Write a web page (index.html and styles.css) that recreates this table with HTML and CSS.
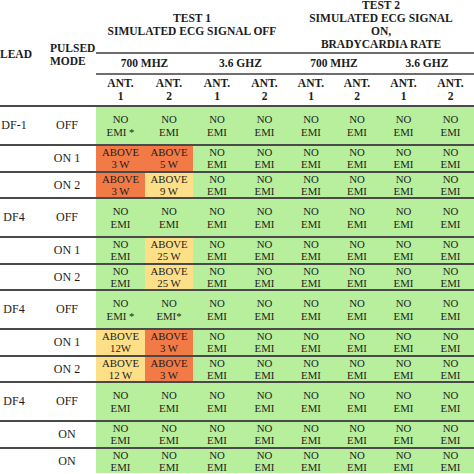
FILE: index.html
```html
<!DOCTYPE html>
<html>
<head>
<meta charset="utf-8">
<link rel="stylesheet" href="styles.css">
</head>
<body>
<table class="emi">
  <colgroup>
    <col class="c-lead"><col class="c-mode">
    <col class="c49"><col class="c48"><col class="c48"><col class="c47">
    <col class="c46"><col class="c46"><col class="c47"><col class="c47">
  </colgroup>
  <thead>
    <tr class="h-test">
      <th rowspan="3" class="h-lead">LEAD</th>
      <th rowspan="3" class="h-mode">PULSED<br>MODE</th>
      <th colspan="4">TEST 1<br>SIMULATED ECG SIGNAL OFF</th>
      <th colspan="4">TEST 2<br>SIMULATED ECG SIGNAL<br>ON,<br>BRADYCARDIA RATE</th>
    </tr>
    <tr class="h-freq">
      <th colspan="2" class="line">700 MHZ</th>
      <th colspan="2" class="line">3.6 GHZ</th>
      <th colspan="2" class="line">700 MHZ</th>
      <th colspan="2" class="line">3.6 GHZ</th>
    </tr>
    <tr class="h-ant">
      <th class="line">ANT.<br>1</th><th class="line">ANT.<br>2</th>
      <th class="line">ANT.<br>1</th><th class="line">ANT.<br>2</th>
      <th class="line">ANT.<br>1</th><th class="line">ANT.<br>2</th>
      <th class="line">ANT.<br>1</th><th class="line">ANT.<br>2</th>
    </tr>
  </thead>
  <tbody>
    <tr class="tall">
      <td class="lead">DF-1</td><td class="mode">OFF</td>
      <td class="g">NO<br>EMI *</td><td class="g">NO<br>EMI</td><td class="g">NO<br>EMI</td><td class="g">NO<br>EMI</td>
      <td class="g">NO<br>EMI</td><td class="g">NO<br>EMI</td><td class="g">NO<br>EMI</td><td class="g">NO<br>EMI</td>
    </tr>
    <tr class="short">
      <td class="lead"></td><td class="mode">ON 1</td>
      <td class="o">ABOVE<br>3 W</td><td class="o">ABOVE<br>5 W</td><td class="g">NO<br>EMI</td><td class="g">NO<br>EMI</td>
      <td class="g">NO<br>EMI</td><td class="g">NO<br>EMI</td><td class="g">NO<br>EMI</td><td class="g">NO<br>EMI</td>
    </tr>
    <tr class="short">
      <td class="lead"></td><td class="mode">ON 2</td>
      <td class="o">ABOVE<br>3 W</td><td class="y">ABOVE<br>9 W</td><td class="g">NO<br>EMI</td><td class="g">NO<br>EMI</td>
      <td class="g">NO<br>EMI</td><td class="g">NO<br>EMI</td><td class="g">NO<br>EMI</td><td class="g">NO<br>EMI</td>
    </tr>
    <tr class="tall">
      <td class="lead">DF4</td><td class="mode">OFF</td>
      <td class="g">NO<br>EMI</td><td class="g">NO<br>EMI</td><td class="g">NO<br>EMI</td><td class="g">NO<br>EMI</td>
      <td class="g">NO<br>EMI</td><td class="g">NO<br>EMI</td><td class="g">NO<br>EMI</td><td class="g">NO<br>EMI</td>
    </tr>
    <tr class="short">
      <td class="lead"></td><td class="mode">ON 1</td>
      <td class="g">NO<br>EMI</td><td class="y">ABOVE<br>25 W</td><td class="g">NO<br>EMI</td><td class="g">NO<br>EMI</td>
      <td class="g">NO<br>EMI</td><td class="g">NO<br>EMI</td><td class="g">NO<br>EMI</td><td class="g">NO<br>EMI</td>
    </tr>
    <tr class="short">
      <td class="lead"></td><td class="mode">ON 2</td>
      <td class="g">NO<br>EMI</td><td class="y">ABOVE<br>25 W</td><td class="g">NO<br>EMI</td><td class="g">NO<br>EMI</td>
      <td class="g">NO<br>EMI</td><td class="g">NO<br>EMI</td><td class="g">NO<br>EMI</td><td class="g">NO<br>EMI</td>
    </tr>
    <tr class="tall">
      <td class="lead">DF4</td><td class="mode">OFF</td>
      <td class="g">NO<br>EMI *</td><td class="g">NO<br>EMI*</td><td class="g">NO<br>EMI</td><td class="g">NO<br>EMI</td>
      <td class="g">NO<br>EMI</td><td class="g">NO<br>EMI</td><td class="g">NO<br>EMI</td><td class="g">NO<br>EMI</td>
    </tr>
    <tr class="short">
      <td class="lead"></td><td class="mode">ON 1</td>
      <td class="y">ABOVE<br>12W</td><td class="o">ABOVE<br>3 W</td><td class="g">NO<br>EMI</td><td class="g">NO<br>EMI</td>
      <td class="g">NO<br>EMI</td><td class="g">NO<br>EMI</td><td class="g">NO<br>EMI</td><td class="g">NO<br>EMI</td>
    </tr>
    <tr class="short">
      <td class="lead"></td><td class="mode">ON 2</td>
      <td class="y">ABOVE<br>12 W</td><td class="o">ABOVE<br>3 W</td><td class="g">NO<br>EMI</td><td class="g">NO<br>EMI</td>
      <td class="g">NO<br>EMI</td><td class="g">NO<br>EMI</td><td class="g">NO<br>EMI</td><td class="g">NO<br>EMI</td>
    </tr>
    <tr class="tall">
      <td class="lead">DF4</td><td class="mode">OFF</td>
      <td class="g">NO<br>EMI</td><td class="g">NO<br>EMI</td><td class="g">NO<br>EMI</td><td class="g">NO<br>EMI</td>
      <td class="g">NO<br>EMI</td><td class="g">NO<br>EMI</td><td class="g">NO<br>EMI</td><td class="g">NO<br>EMI</td>
    </tr>
    <tr class="short">
      <td class="lead"></td><td class="mode">ON</td>
      <td class="g">NO<br>EMI</td><td class="g">NO<br>EMI</td><td class="g">NO<br>EMI</td><td class="g">NO<br>EMI</td>
      <td class="g">NO<br>EMI</td><td class="g">NO<br>EMI</td><td class="g">NO<br>EMI</td><td class="g">NO<br>EMI</td>
    </tr>
    <tr class="short">
      <td class="lead"></td><td class="mode">ON</td>
      <td class="g">NO<br>EMI</td><td class="g">NO<br>EMI</td><td class="g">NO<br>EMI</td><td class="g">NO<br>EMI</td>
      <td class="g">NO<br>EMI</td><td class="g">NO<br>EMI</td><td class="g">NO<br>EMI</td><td class="g">NO<br>EMI</td>
    </tr>
  </tbody>
</table>
</body>
</html>
```

FILE: styles.css
```css
html, body {
  margin: 0;
  padding: 0;
  background: #ffffff;
  overflow: hidden;
}

.emi {
  margin-top: -3px;
  width: 474px;
  table-layout: fixed;
  border-collapse: separate;
  border-spacing: 0;
  font-family: "Liberation Serif", "Times New Roman", serif;
  color: #1c1c1c;
}

.c-lead { width: 28px; }
.c-mode { width: 68px; }
.c49 { width: 49px; }
.c48 { width: 48px; }
.c47 { width: 47px; }
.c46 { width: 46px; }

.emi th {
  font-size: 11.5px;
  font-weight: bold;
  line-height: 13px;
  padding: 0;
  text-align: center;
  vertical-align: middle;
  white-space: nowrap;
}

.h-test { height: 55px; }
.h-freq { height: 21px; }
.h-ant { height: 32px; }

.emi th.line { border-top: 2px solid #6e6e6e; }

.emi th.h-lead {
  padding-top: 7px;
  text-align: center;
}
.emi th.h-mode {
  padding-top: 7px;
  padding-left: 22px;
  text-align: left;
}

.emi td {
  font-size: 10.8px;
  padding: 0;
  text-align: center;
  vertical-align: middle;
  border-top: 2px solid #4a4a4a;
  white-space: nowrap;
}

.emi td.lead, .emi td.mode { font-size: 12px; }

.tall { height: 39px; }
.tall td { line-height: 13px; }
.short { height: 26.5px; }
.short td { line-height: 12px; }

.emi td.lead { text-align: center; }
.emi td.mode { padding-left: 10px; }

.g { background: #b8ef9c; }
.o { background: #f27a46; }
.y { background: #fddf87; }
```
